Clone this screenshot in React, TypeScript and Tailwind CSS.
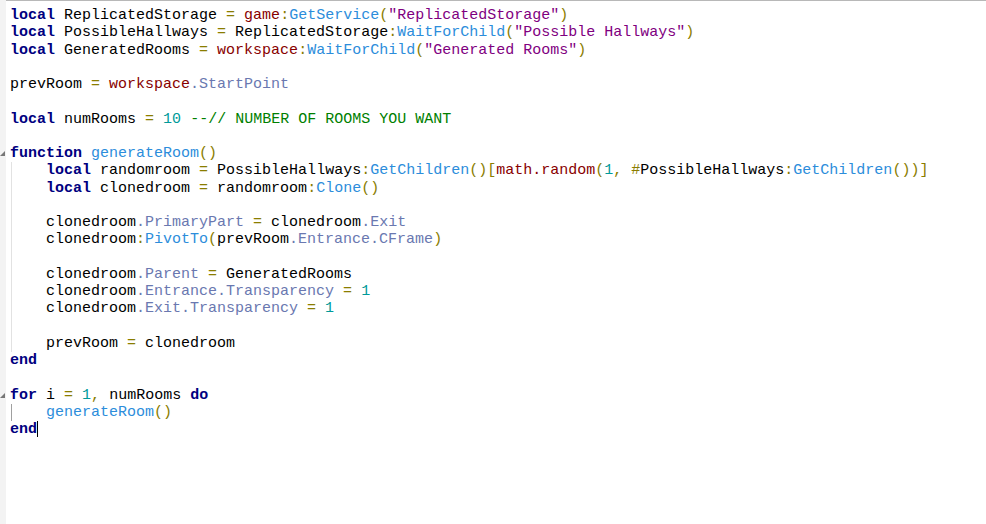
type Kind = 'k' | 'i' | 'o' | 'g' | 'm' | 'p' | 's' | 'n' | 'c' | '_';
type Tok = [Kind, string];

const colors: Record<Kind, string> = {
  k: 'text-[#00007f] font-bold',
  i: 'text-black',
  o: 'text-[#8a7d00]',
  g: 'text-[#880000]',
  m: 'text-[#2c8ddb]',
  p: 'text-[#6a78b0]',
  s: 'text-[#7f007f]',
  n: 'text-[#009a9a]',
  c: 'text-[#007f00]',
  _: '',
};

const lines: Tok[][] = [
  [['k', 'local'], ['_', ' '], ['i', 'ReplicatedStorage'], ['_', ' '], ['o', '='], ['_', ' '], ['g', 'game'], ['o', ':'], ['m', 'GetService'], ['o', '('], ['s', '"ReplicatedStorage"'], ['o', ')']],
  [['k', 'local'], ['_', ' '], ['i', 'PossibleHallways'], ['_', ' '], ['o', '='], ['_', ' '], ['i', 'ReplicatedStorage'], ['o', ':'], ['m', 'WaitForChild'], ['o', '('], ['s', '"Possible Hallways"'], ['o', ')']],
  [['k', 'local'], ['_', ' '], ['i', 'GeneratedRooms'], ['_', ' '], ['o', '='], ['_', ' '], ['g', 'workspace'], ['o', ':'], ['m', 'WaitForChild'], ['o', '('], ['s', '"Generated Rooms"'], ['o', ')']],
  [],
  [['i', 'prevRoom'], ['_', ' '], ['o', '='], ['_', ' '], ['g', 'workspace'], ['p', '.StartPoint']],
  [],
  [['k', 'local'], ['_', ' '], ['i', 'numRooms'], ['_', ' '], ['o', '='], ['_', ' '], ['n', '10'], ['_', ' '], ['c', '--// NUMBER OF ROOMS YOU WANT']],
  [],
  [['k', 'function'], ['_', ' '], ['m', 'generateRoom'], ['o', '()']],
  [['_', '    '], ['k', 'local'], ['_', ' '], ['i', 'randomroom'], ['_', ' '], ['o', '='], ['_', ' '], ['i', 'PossibleHallways'], ['o', ':'], ['m', 'GetChildren'], ['o', '()['], ['g', 'math.random'], ['o', '('], ['n', '1'], ['o', ','], ['_', ' '], ['o', '#'], ['i', 'PossibleHallways'], ['o', ':'], ['m', 'GetChildren'], ['o', '())]']],
  [['_', '    '], ['k', 'local'], ['_', ' '], ['i', 'clonedroom'], ['_', ' '], ['o', '='], ['_', ' '], ['i', 'randomroom'], ['o', ':'], ['m', 'Clone'], ['o', '()']],
  [],
  [['_', '    '], ['i', 'clonedroom'], ['p', '.PrimaryPart'], ['_', ' '], ['o', '='], ['_', ' '], ['i', 'clonedroom'], ['p', '.Exit']],
  [['_', '    '], ['i', 'clonedroom'], ['o', ':'], ['m', 'PivotTo'], ['o', '('], ['i', 'prevRoom'], ['p', '.Entrance.CFrame'], ['o', ')']],
  [],
  [['_', '    '], ['i', 'clonedroom'], ['p', '.Parent'], ['_', ' '], ['o', '='], ['_', ' '], ['i', 'GeneratedRooms']],
  [['_', '    '], ['i', 'clonedroom'], ['p', '.Entrance.Transparency'], ['_', ' '], ['o', '='], ['_', ' '], ['n', '1']],
  [['_', '    '], ['i', 'clonedroom'], ['p', '.Exit.Transparency'], ['_', ' '], ['o', '='], ['_', ' '], ['n', '1']],
  [],
  [['_', '    '], ['i', 'prevRoom'], ['_', ' '], ['o', '='], ['_', ' '], ['i', 'clonedroom']],
  [['k', 'end']],
  [],
  [['k', 'for'], ['_', ' '], ['i', 'i'], ['_', ' '], ['o', '='], ['_', ' '], ['n', '1'], ['o', ','], ['_', ' '], ['i', 'numRooms'], ['_', ' '], ['k', 'do']],
  [['_', '    '], ['m', 'generateRoom'], ['o', '()']],
  [['k', 'end']],
];

// fold markers sit on these lines; guides span [from, to] (inclusive, 0-based)
const folds = [8, 22];
const guides: { from: number; to: number; active: boolean }[] = [
  { from: 9, to: 19, active: false },
  { from: 23, to: 23, active: true },
];

function Line({ toks, cursor }: { toks: Tok[]; cursor?: boolean }) {
  return (
    <div className="h-[17.25px] whitespace-pre">
      {toks.map(([k, t], j) => (
        <span key={j} className={colors[k]}>
          {t}
        </span>
      ))}
      {cursor && <span className="inline-block w-px h-[16px] bg-black align-[-4px]" />}
    </div>
  );
}

function FoldArrow() {
  return (
    <svg width="5" height="5" viewBox="0 0 5 5" className="block">
      <polygon points="5,0 5,5 0,5" fill="#777" />
    </svg>
  );
}

export default function App() {
  const rows: React.ReactNode[] = [];
  let n = 0;
  while (n < lines.length) {
    const g = guides.find((x) => x.from === n);
    if (g) {
      const block = lines.slice(g.from, g.to + 1);
      rows.push(
        <div key={n} className="relative">
          <div
            className={
              g.active
                ? 'absolute left-[1px] top-0 bottom-0 w-px bg-[#a0a0a0]'
                : 'absolute left-[1px] top-0 bottom-0 w-px bg-[#e2e2e2]'
            }
          />
          {block.map((t, j) => (
            <Line key={j} toks={t} />
          ))}
        </div>
      );
      n = g.to + 1;
    } else {
      rows.push(<Line key={n} toks={lines[n]} cursor={n === lines.length - 1} />);
      n++;
    }
  }

  return (
    <div className="w-[986px] h-[524px] bg-white flex overflow-hidden">
      <div className="w-[6px] shrink-0 bg-[#f3f3f3] pt-[7px] flex flex-col">
        {lines.map((_, j) => (
          <div key={j} className="h-[17.25px] flex items-center">
            {folds.includes(j) && <FoldArrow />}
          </div>
        ))}
      </div>
      <div className="flex-1 border-t border-[#b8b8b8] pl-[4px] pt-[6px] font-['Liberation_Mono',monospace] text-[15px] leading-[17.25px]">
        {rows}
      </div>
    </div>
  );
}
